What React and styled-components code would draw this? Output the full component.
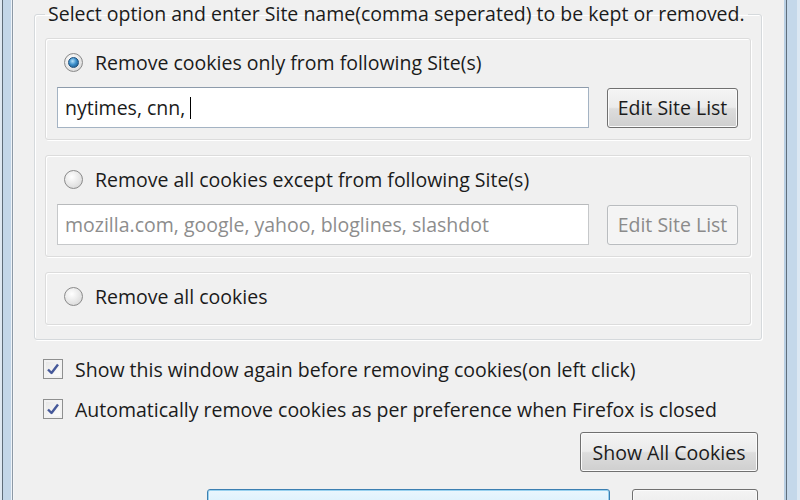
import React from "react";
import styled, { createGlobalStyle } from "styled-components";

const GlobalStyle = createGlobalStyle`
  html, body {
    margin: 0;
    padding: 0;
    background: #f0f0f0;
  }
  body {
    font-family: "Open Sans", "Noto Sans", sans-serif;
    color: #1b1b1b;
  }
`;

const Window = styled.div`
  width: 800px;
  height: 500px;
  display: flex;
  overflow: hidden;
  background: #f0f0f0;
`;

const FrameSide = styled.div`
  width: ${(p) => (p.right ? "16px" : "14px")};
  flex-shrink: 0;
  background: ${(p) =>
    p.right
      ? "linear-gradient(to right, #b9cfe3 0 2px, #5f6e7c 2px 3px, #c4d8ea 3px 13px, #dce8f3 13px 16px)"
      : "linear-gradient(to right, #dfe8f1 0 2px, #5f6c78 2px 3px, #c3d6e8 3px 11px, #eef3f8 11px 12px, #8d99a5 12px 13px, #f4f6f8 13px 14px)"};
`;

const Body = styled.div`
  flex: 1;
  padding: 2px 22px 0 20px;
  font-size: 19.5px;
`;

const GroupBox = styled.fieldset`
  margin: 0;
  padding: 12px 10px 14px 10px;
  border: 1px solid #d5d9dc;
  border-radius: 3px;
  box-shadow: inset 1px 1px 0 #fff, 1px 1px 0 #fff;
`;

const Legend = styled.legend`
  padding: 0 3px;
  line-height: 24px;
  height: 24px;
  white-space: nowrap;
`;

const OptionBox = styled.div`
  border: 1px solid #dcdcdc;
  border-radius: 3px;
  box-shadow: inset 1px 1px 0 #fff, 1px 1px 0 #fff;
  padding: 11px 12px ${(p) => (p.tall ? "11px" : "16px")} 11px;
  & + & {
    margin-top: 15px;
  }
`;

const RadioRow = styled.div`
  display: flex;
  align-items: center;
  height: 24px;
  padding-left: 7px;
  gap: 12px;
`;

const Radio = styled.span`
  width: 17px;
  height: 17px;
  border-radius: 50%;
  border: 1px solid #8a8a8a;
  background: radial-gradient(circle at 40% 35%, #ffffff 0, #e4e4e4 60%, #cfcfcf 100%);
  display: flex;
  align-items: center;
  justify-content: center;
  flex-shrink: 0;
  &::after {
    content: "";
    display: ${(p) => (p.checked ? "block" : "none")};
    width: 9px;
    height: 9px;
    border-radius: 50%;
    border: 1px solid #1d4f7c;
    background: radial-gradient(circle at 40% 35%, #b5e2fb 0, #3c8fcb 45%, #164a78 100%);
  }
`;

const FieldRow = styled.div`
  display: flex;
  gap: 18px;
  margin-top: 13px;
  align-items: center;
`;

const TextField = styled.div`
  flex: 1;
  height: 41px;
  box-sizing: border-box;
  border: 1px solid ${(p) => (p.disabled ? "#c6c8ca" : "#a4b3c3")};
  border-top-color: ${(p) => (p.disabled ? "#b8babc" : "#8d9bab")};
  background: #fff;
  display: flex;
  align-items: center;
  padding-left: 7px;
  color: ${(p) => (p.disabled ? "#8d8d8d" : "#1b1b1b")};
  white-space: nowrap;
`;

const Caret = styled.span`
  display: inline-block;
  width: 1px;
  height: 22px;
  background: #000;
  margin-left: 5px;
`;

const Button = styled.button`
  font-family: inherit;
  font-size: 19.5px;
  width: ${(p) => p.w || "131px"};
  height: 40px;
  padding: 0;
  border-radius: 3px;
  border: 1px solid ${(p) => (p.disabled ? "#b9bcbf" : "#707070")};
  color: ${(p) => (p.disabled ? "#8b8b8b" : "#1b1b1b")};
  background: ${(p) =>
    p.disabled
      ? "#f4f4f4"
      : "linear-gradient(to bottom, #f4f4f4 0%, #ebebeb 48%, #dddddd 52%, #cfcfcf 100%)"};
  box-shadow: inset 0 0 0 1px ${(p) => (p.disabled ? "#f7f7f7" : "#fbfbfb")};
  flex-shrink: 0;
  white-space: nowrap;
`;

const DefaultButton = styled(Button)`
  border-color: #3c7fb1;
  background: linear-gradient(to bottom, #eaf6fd 0%, #d9f0fc 48%, #bee6fd 52%, #a7d9f5 100%);
  box-shadow: inset 0 0 0 1px #98d1ef, inset 0 0 0 2px #eaf6fd;
`;

const CheckRow = styled.div`
  display: flex;
  align-items: center;
  height: 30px;
  padding-left: 9px;
  gap: 12px;
  margin-top: ${(p) => p.mt || "10px"};
  white-space: nowrap;
`;

const CheckBox = styled.span`
  width: 18px;
  height: 18px;
  border: 1px solid #8e8f8f;
  background: linear-gradient(135deg, #e4e4e4 0%, #f6f6f6 60%, #ffffff 100%);
  box-shadow: inset 0 0 0 2px #f2f2f2;
  display: flex;
  align-items: center;
  justify-content: center;
  flex-shrink: 0;
`;

const ActionRow = styled.div`
  display: flex;
  justify-content: flex-end;
  margin-top: 8px;
  padding-right: 4px;
`;

const DialogButtons = styled.div`
  display: flex;
  justify-content: flex-end;
  gap: 22px;
  margin-top: 17px;
  padding-right: 4px;
`;

function Check() {
  return (
    <svg width="14" height="14" viewBox="0 0 14 14">
      <path
        d="M2 7.5 L5.5 11 L12 2.5"
        fill="none"
        stroke="#46599a"
        strokeWidth="2.4"
        strokeLinejoin="round"
      />
    </svg>
  );
}

export default function App() {
  return (
    <Window>
      <GlobalStyle />
      <FrameSide />
      <Body>
        <GroupBox>
          <Legend>Select option and enter Site name(comma seperated) to be kept or removed.</Legend>
          <OptionBox tall>
            <RadioRow>
              <Radio checked />
              <span>Remove cookies only from following Site(s)</span>
            </RadioRow>
            <FieldRow>
              <TextField>
                nytimes, cnn,
                <Caret />
              </TextField>
              <Button>Edit Site List</Button>
            </FieldRow>
          </OptionBox>
          <OptionBox tall>
            <RadioRow>
              <Radio />
              <span>Remove all cookies except from following Site(s)</span>
            </RadioRow>
            <FieldRow>
              <TextField disabled>mozilla.com, google, yahoo, bloglines, slashdot</TextField>
              <Button disabled>Edit Site List</Button>
            </FieldRow>
          </OptionBox>
          <OptionBox>
            <RadioRow>
              <Radio />
              <span>Remove all cookies</span>
            </RadioRow>
          </OptionBox>
        </GroupBox>
        <CheckRow mt="14px">
          <CheckBox>
            <Check />
          </CheckBox>
          <span>Show this window again before removing cookies(on left click)</span>
        </CheckRow>
        <CheckRow>
          <CheckBox>
            <Check />
          </CheckBox>
          <span>Automatically remove cookies as per preference when Firefox is closed</span>
        </CheckRow>
        <ActionRow>
          <Button w="178px">Show All Cookies</Button>
        </ActionRow>
        {/* dialog buttons run off the bottom edge; their labels are below the fold */}
        <DialogButtons>
          <DefaultButton w="403px" aria-label="Remove Cookies" />
          <Button w="126px" aria-label="Cancel" />
        </DialogButtons>
      </Body>
      <FrameSide right />
    </Window>
  );
}
